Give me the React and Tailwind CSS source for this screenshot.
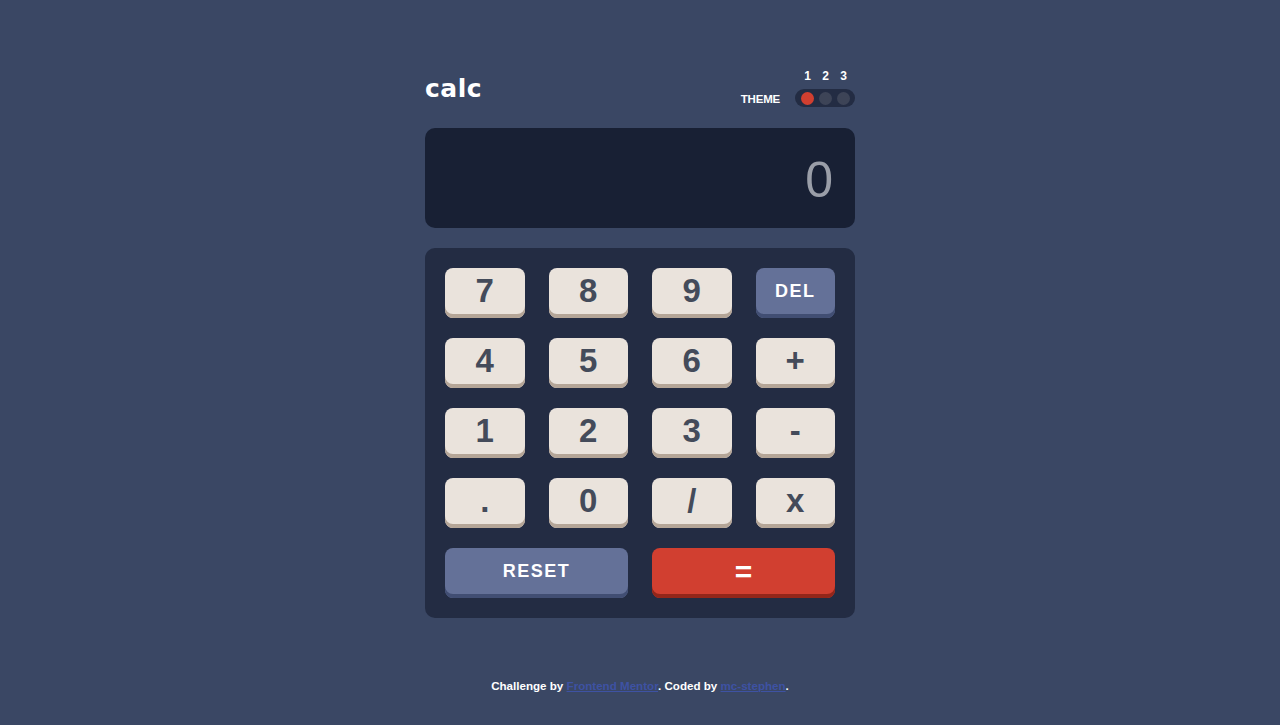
import React from "react";

const numKey =
  "h-[50px] rounded-[8px] bg-[#eae3dc] shadow-[inset_0_-4px_0_#b4a597] text-[#444b5a] text-[33px] font-bold flex items-center justify-center pb-1";

function Key({ label, kind = "num", span = false }) {
  let cls = numKey;
  if (kind === "blue")
    cls =
      "h-[50px] rounded-[8px] bg-[#647198] shadow-[inset_0_-4px_0_#414e73] text-white text-[18px] font-bold flex items-center justify-center pb-1 tracking-[1.5px]";
  if (kind === "red")
    cls =
      "h-[50px] rounded-[8px] bg-[#d13f30] shadow-[inset_0_-4px_0_#93261a] text-white text-[30px] font-bold flex items-center justify-center pb-1";
  return (
    <button className={cls + (span ? " col-span-2" : "")} style={{ fontFamily: '"Liberation Sans", Arial, sans-serif' }}>
      {label}
    </button>
  );
}

export default function App() {
  const keys = ["7", "8", "9", "DEL", "4", "5", "6", "+", "1", "2", "3", "-", ".", "0", "/", "x"];
  return (
    <div
      className="min-h-[725px] bg-[#3a4764] flex flex-col items-center pt-[68px]"
      style={{ fontFamily: '"Liberation Sans", Arial, sans-serif' }}
    >
      <div className="w-[430px]">
        <div className="flex items-center justify-between h-[40px]">
          <div
            className="text-white text-[25px] font-bold tracking-[0.5px] leading-none mt-[1px]"
            style={{ fontFamily: '"DejaVu Sans", "Liberation Sans", sans-serif' }}
          >
            calc
          </div>
          <div className="flex flex-col items-end">
            <div className="w-[60px] pl-[6px] flex gap-[5px] text-white text-[12px] font-bold leading-none mb-[7px] pt-[1px]">
              <span className="w-[13px] text-center">1</span>
              <span className="w-[13px] text-center">2</span>
              <span className="w-[13px] text-center">3</span>
            </div>
            <div className="flex items-center gap-[15px]">
              <span className="text-white text-[11.5px] font-bold leading-none tracking-[-0.2px] pt-[3px]">THEME</span>
              <div className="w-[60px] h-[18px] rounded-full bg-[#232c43] pl-[6px] flex items-center gap-[5px]">
                <span className="w-[13px] h-[13px] rounded-full bg-[#d13f30]"></span>
                <span className="w-[13px] h-[13px] rounded-full bg-[#3d4457]"></span>
                <span className="w-[13px] h-[13px] rounded-full bg-[#3d4457]"></span>
              </div>
            </div>
          </div>
        </div>

        <div className="mt-5 h-[100px] rounded-[10px] bg-[#182034] flex items-center justify-end pr-[22px] pt-[4px]">
          <span className="text-[#9a9ea8] text-[50px] leading-none">0</span>
        </div>

        <div className="mt-5 rounded-[10px] bg-[#232c43] p-5 grid grid-cols-4 gap-x-6 gap-y-5">
          {keys.map((k) => (
            <Key key={k} label={k} kind={k === "DEL" ? "blue" : "num"} />
          ))}
          <Key label="RESET" kind="blue" span />
          <Key label="=" kind="red" span />
        </div>
      </div>

      <div className="mt-[59px] text-white text-[11.6px] font-bold">
        Challenge by{" "}
        <a href="#" className="text-[#3e52a3] underline">
          Frontend Mentor
        </a>
        . Coded by{" "}
        <a href="#" className="text-[#3e52a3] underline">
          mc-stephen
        </a>
        .
      </div>
    </div>
  );
}
